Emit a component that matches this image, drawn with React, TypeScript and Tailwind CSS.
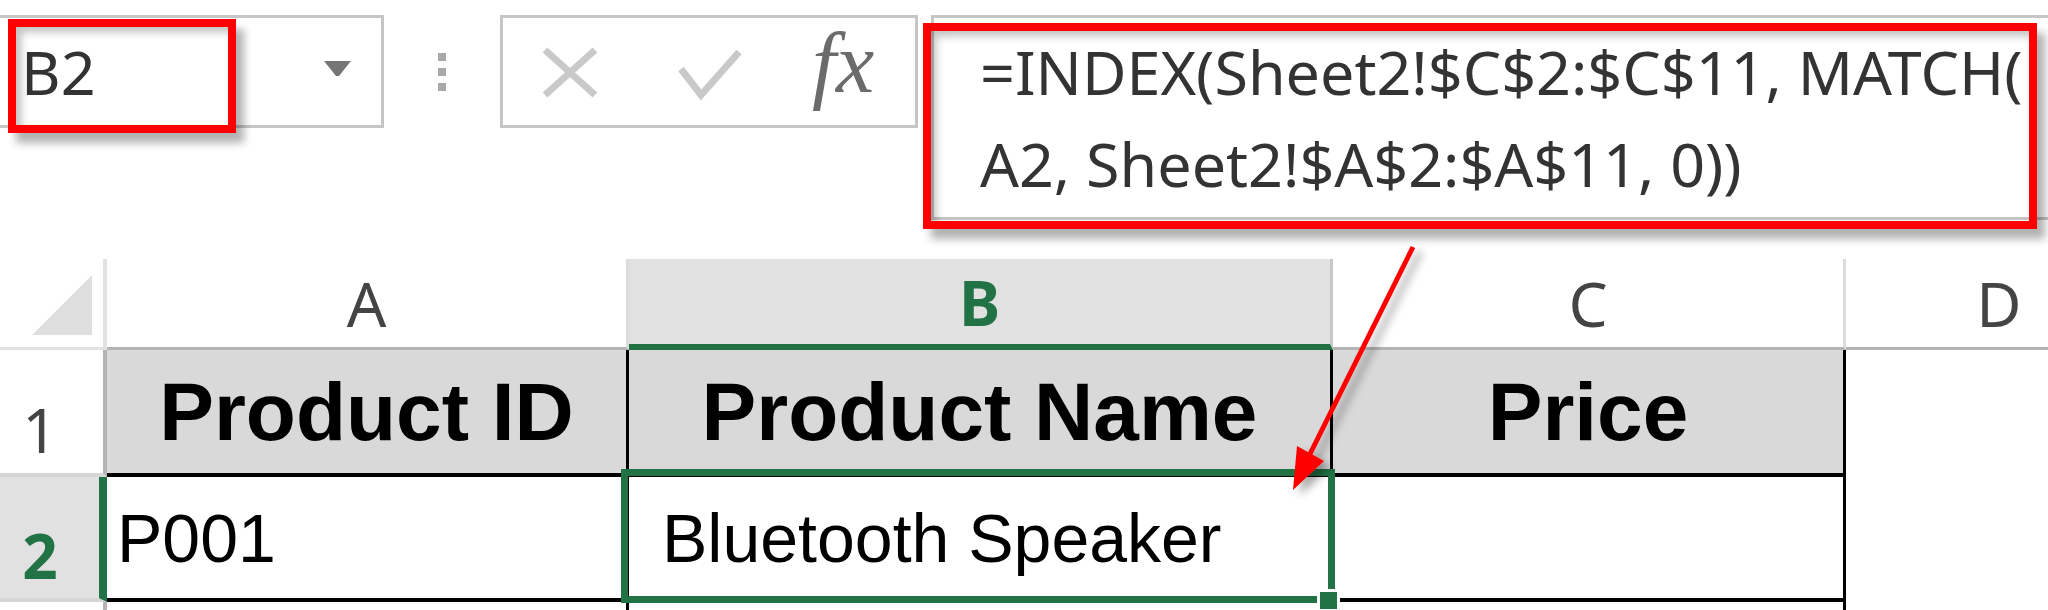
import React from "react";

const UI_FONT = "font-['Noto_Sans','Open_Sans',sans-serif]";
const CELL_FONT = "font-['Liberation_Sans',Arial,sans-serif]";

/** 取消按钮（灰色 X） */
function CancelIcon() {
  return (
    <svg width="56" height="51" viewBox="0 0 56 51" fill="none" stroke="#c9c9c9" strokeWidth="7">
      <path d="M3 3 L53 48 M53 3 L3 48" />
    </svg>
  );
}

/** 确认按钮（灰色对勾） */
function EnterIcon() {
  return (
    <svg width="64" height="52" viewBox="0 0 64 52" fill="none" stroke="#c9c9c9" strokeWidth="7">
      <path d="M3 21 L23 47 L61 4" />
    </svg>
  );
}

function FormulaBar() {
  return (
    <div className={`flex h-[259px] items-start pt-[15px] ${UI_FONT}`}>
      {/* 名称框 */}
      <div className="flex h-[113px] w-[384px] shrink-0 items-start border-y-[3px] border-r-[3px] border-[#c6c6c6] pl-[21px] pt-[8px]">
        <span className="text-[61px] leading-[92px] text-[#333]">B2</span>
        <svg className="ml-auto mr-[30px] mt-[35px]" width="27" height="15" viewBox="0 0 27 15">
          <polygon points="0,0 27,0 15,15 12,15" fill="#767676" />
        </svg>
      </div>

      {/* 分隔点 */}
      <div className="flex w-[116px] shrink-0 flex-col items-center gap-[7px] pt-[38px]">
        <span className="h-[8px] w-[8px] bg-[#a8a8a8]" />
        <span className="h-[8px] w-[8px] bg-[#a8a8a8]" />
        <span className="h-[8px] w-[8px] bg-[#a8a8a8]" />
      </div>

      {/* 取消 / 确认 / 插入函数 */}
      <div className="flex h-[113px] w-[418px] shrink-0 items-start border-[3px] border-[#c6c6c6] pl-[39px]">
        <div className="mt-[29px]">
          <CancelIcon />
        </div>
        <div className="ml-[80px] mt-[30px]">
          <EnterIcon />
        </div>
        <span className="ml-[70px] mt-[2px] font-['Liberation_Serif','Times_New_Roman',serif] text-[86px] italic leading-none text-[#6b6b6b]">
          fx
        </span>
      </div>

      {/* 编辑栏 */}
      <div className="ml-[13px] h-[205px] flex-1 border-y-[3px] border-l-[3px] border-[#c6c6c6] pl-[46px] pt-[8px] text-[61px] leading-[92px] whitespace-nowrap text-[#333]">
        <div>=INDEX(Sheet2!$C$2:$C$11, MATCH(</div>
        <div>A2, Sheet2!$A$2:$A$11, 0))</div>
      </div>
    </div>
  );
}

function Grid() {
  const head = "flex items-center justify-center border-b-[3px] border-r-[3px] border-b-[#b4b4b4] border-r-[#dcdcdc]";
  const titleCell = `flex items-center justify-center border-b-[4px] border-r-[3px] border-black bg-[#d9d9d9] text-[82px] font-bold leading-none text-black ${CELL_FONT}`;
  const dataCell = `flex items-center border-b-[4px] border-r-[3px] border-black bg-white text-[68px] leading-none text-black ${CELL_FONT}`;

  return (
    <div className="flex flex-col">
      {/* 列标题 */}
      <div className={`flex h-[91px] text-[62px] leading-none text-[#444] ${UI_FONT}`}>
        <div className="flex w-[107px] shrink-0 items-end justify-end border-b-[3px] border-r-[4px] border-[#e2e2e2] pb-[12px] pr-[11px]">
          <svg width="60" height="60" viewBox="0 0 60 60">
            <polygon points="60,0 60,60 0,60" fill="#dfdfdf" />
          </svg>
        </div>
        <div className={`${head} w-[522px] shrink-0`}>A</div>
        <div className="flex w-[704px] shrink-0 items-center justify-center border-b-[6px] border-r-[3px] border-b-[#217346] border-r-[#c8c8c8] bg-[#e1e1e1] font-bold text-[#217346]">
          B
        </div>
        <div className={`${head} w-[513px] shrink-0`}>C</div>
        <div className="flex w-[306px] shrink-0 items-center justify-center border-b-[3px] border-b-[#b4b4b4]">D</div>
      </div>

      {/* 第 1 行 */}
      <div className="flex h-[127px]">
        <div className={`flex w-[107px] shrink-0 items-end border-b-[4px] border-r-[4px] border-b-[#d6d6d6] border-r-[#b4b4b4] pb-[13px] text-[62px] leading-none text-[#444] ${UI_FONT}`}>
          <div className="w-[80px] text-center">1</div>
        </div>
        <div className={`${titleCell} w-[522px] shrink-0`}>Product ID</div>
        <div className={`${titleCell} w-[704px] shrink-0`}>Product Name</div>
        <div className={`${titleCell} w-[513px] shrink-0`}>Price</div>
        <div className="w-[306px] shrink-0" />
      </div>

      {/* 第 2 行 */}
      <div className="flex h-[125px]">
        <div className={`flex w-[107px] shrink-0 items-end border-b-[4px] border-r-[8px] border-b-[#d6d6d6] border-r-[#217346] bg-[#e1e1e1] pb-[12px] text-[62px] font-bold leading-none text-[#217346] ${UI_FONT}`}>
          <div className="w-[80px] text-center">2</div>
        </div>
        <div className={`${dataCell} w-[522px] shrink-0 pl-[10px]`}>P001</div>
        <div className={`${dataCell} relative w-[704px] shrink-0 pl-[33px]`}>
          Bluetooth Speaker
          {/* 选中框 + 填充柄 */}
          <div className="absolute -bottom-[5px] -left-[8px] -right-[5px] -top-[8px] border-[7px] border-[#217346]" />
          <div className="absolute -bottom-[14px] -right-[10px] h-[23px] w-[23px] border-[3px] border-white bg-[#217346]" />
        </div>
        <div className={`${dataCell} w-[513px] shrink-0`} />
        <div className="w-[306px] shrink-0" />
      </div>

      {/* 第 3 行（截断） */}
      <div className="flex h-[20px]">
        <div className="w-[107px] shrink-0 border-r-[4px] border-r-[#b4b4b4]" />
        <div className="w-[522px] shrink-0 border-r-[3px] border-black" />
        <div className="w-[704px] shrink-0 border-r-[3px] border-black" />
        <div className="w-[513px] shrink-0 border-r-[3px] border-black" />
      </div>
    </div>
  );
}

/** 标注：红框和红色箭头 */
function Annotations() {
  const redBox =
    "pointer-events-none absolute border-[8px] border-[#ff0000] shadow-[8px_10px_8px_rgba(0,0,0,0.3),inset_5px_5px_8px_rgba(0,0,0,0.25)]";
  return (
    <>
      <div className={`${redBox} left-[8px] top-[19px] h-[114px] w-[228px]`} />
      <div className={`${redBox} left-[923px] top-[23px] h-[206px] w-[1114px]`} />
      <svg className="pointer-events-none absolute left-0 top-0" width="2048" height="610">
        <defs>
          <filter id="arrowShadow" x="-30%" y="-10%" width="160%" height="130%">
            <feDropShadow dx="7" dy="5" stdDeviation="4" floodColor="#000" floodOpacity="0.35" />
          </filter>
        </defs>
        <g filter="url(#arrowShadow)">
          <line x1="1413" y1="247" x2="1309" y2="456" stroke="#ff0000" strokeWidth="5" />
          <polygon points="1293,490 1324,461 1297,446" fill="#ff0000" />
        </g>
      </svg>
    </>
  );
}

export default function App() {
  return (
    <div className="relative h-[610px] w-[2048px] overflow-hidden bg-white">
      <FormulaBar />
      <Grid />
      <Annotations />
    </div>
  );
}
